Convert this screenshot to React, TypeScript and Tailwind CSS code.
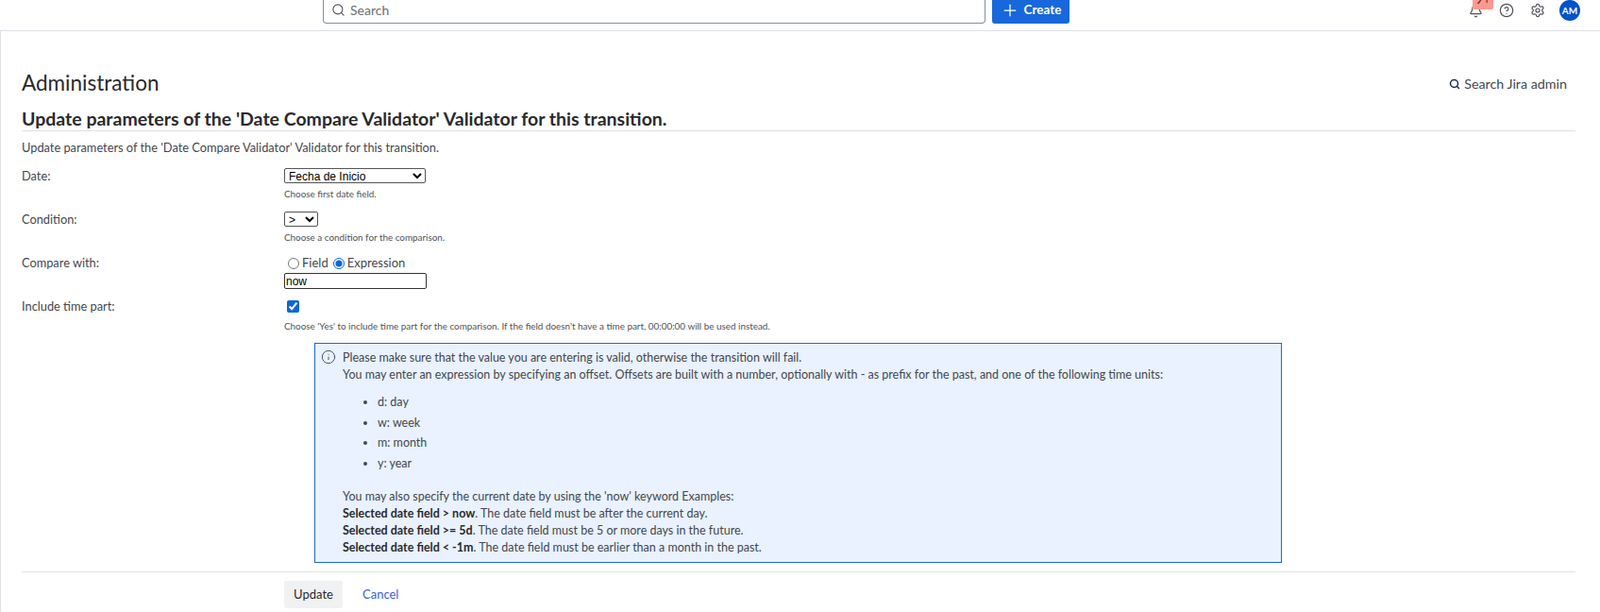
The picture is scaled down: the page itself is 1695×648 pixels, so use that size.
import React from "react";
import { Search, Plus, Bell, CircleHelp, Settings, Info } from "lucide-react";

const font = "font-['Lato','Open_Sans',sans-serif]";

const Row = ({ label, children }: { label: string; children: React.ReactNode }) => (
  <div className="flex">
    <div className="w-[278px] shrink-0 text-[12.8px] leading-[18px] text-[#44474f]">{label}</div>
    <div className="flex-1">{children}</div>
  </div>
);

const Help = ({ children }: { children: React.ReactNode }) => (
  <div className="text-[9.9px] leading-[12px] text-[#505258]">{children}</div>
);

export default function App() {
  return (
    <div className={`${font} h-[648px] w-[1695px] overflow-hidden bg-white text-[#292a2e]`}>
      {/* Top bar */}
      <header className="flex h-[33px] border-b border-[#dfe1e6]">
        <div className="ml-[342px] flex h-[25px] w-[702px] items-center gap-[5px] rounded-b-[4px] border-x border-b border-[#8590a2] pb-[3px] pl-[8px]">
          <Search size={15} strokeWidth={1.8} className="text-[#505258]" />
          <span className="text-[14px] text-[#6b6e76]">Search</span>
        </div>
        <button className="ml-[7px] flex h-[25px] w-[82px] items-center justify-center gap-[5px] rounded-b-[3px] bg-[#1868db] pb-[4px] text-[13.5px] font-bold text-white">
          <Plus size={20} strokeWidth={1.5} />
          Create
        </button>
        <div className="ml-auto mr-[21px] flex h-[22px] items-center">
          <div className="relative mr-[17px] flex w-[15px] justify-center">
            <Bell size={15} strokeWidth={1.8} className="mt-[1px] text-[#505258]" />
            <span className="absolute left-[4px] top-[-4px] flex h-[11px] w-[22px] items-end justify-center rounded-b-[2px] bg-[#fd9891] pb-[4px] text-[14px] leading-[14px] text-[#5d1f1a]">
              9+
            </span>
          </div>
          <CircleHelp size={16} strokeWidth={1.8} className="mr-[17px] text-[#505258]" />
          <Settings size={16} strokeWidth={1.8} className="mr-[15px] text-[#505258]" />
          <div className="flex h-[22px] w-[22px] items-center justify-center rounded-full bg-[#0052cc] text-[10px] font-bold text-white">
            AM
          </div>
        </div>
      </header>

      {/* Page */}
      <main className="h-[615px] border-l border-[#dfe1e6] pl-[22px] pr-[26px]">
        <div className="flex items-center justify-between pt-[41px]">
          <h1 className="text-[22.5px] leading-[28px] text-[#292a2e]">Administration</h1>
          <a className="mt-[1px] flex items-center gap-[4px] pr-[9px] text-[14.3px] text-[#44474f]">
            <Search size={12} strokeWidth={3} className="text-[#172b4d]" />
            Search Jira admin
          </a>
        </div>

        <h2 className="mt-[12px] border-b border-[#dfe1e6] pb-[1px] text-[19.5px] font-bold leading-[23px] text-[#292a2e]">
          Update parameters of the 'Date Compare Validator' Validator for this transition.
        </h2>
        <p className="mt-[8px] text-[12.8px] leading-[18px] text-[#44474f]">
          Update parameters of the 'Date Compare Validator' Validator for this transition.
        </p>

        <form className="mt-[12px]">
          <Row label="Date:">
            <select className="mt-[1px] block h-[16px] w-[150px] rounded-[2px] border border-[#555] bg-white font-['Liberation_Sans',sans-serif] text-[12px] leading-[14px] text-black" defaultValue="inicio">
              <option value="inicio">Fecha de Inicio</option>
            </select>
            <div className="mt-[5px]"><Help>Choose first date field.</Help></div>
          </Row>

          <div className="mt-[12px]">
            <Row label="Condition:">
              <select className="mt-[1px] block h-[16px] w-[36px] rounded-[2px] border border-[#555] bg-white font-['Liberation_Sans',sans-serif] text-[12px] leading-[14px] text-black" defaultValue="gt">
                <option value="gt">&gt;</option>
              </select>
              <div className="mt-[5px]"><Help>Choose a condition for the comparison.</Help></div>
            </Row>
          </div>

          <div className="mt-[12px]">
            <Row label="Compare with:">
              <div className="mt-[1px] flex h-[18px] items-center pl-[4px] text-[13px] text-[#44474f]">
                <input type="radio" name="cmp" className="m-0 h-[12px] w-[12px]" />
                <span className="ml-[3px]">Field</span>
                <input type="radio" name="cmp" defaultChecked className="ml-[5px] h-[12px] w-[12px] accent-[#0b66d8]" />
                <span className="ml-[3px]">Expression</span>
              </div>
              <input
                defaultValue="now"
                className="mt-[1px] block h-[17px] w-[151px] rounded-[2px] border border-[#333] bg-white pl-[1px] font-['Liberation_Sans',sans-serif] text-[12px] text-black outline-none"
              />
            </Row>
          </div>

          <div className="mt-[9px]">
            <Row label="Include time part:">
              <input type="checkbox" defaultChecked className="ml-[3px] mt-[3px] block h-[13px] w-[13px] accent-[#0b66d8]" />
              <div className="mt-[8px]">
                <Help>Choose 'Yes' to include time part for the comparison. If the field doesn't have a time part, 00:00:00 will be used instead.</Help>
              </div>
            </Row>
          </div>

          {/* Info message */}
          <div className="ml-[310px] mt-[12px] flex h-[233px] w-[1025px] border border-[#1868db] bg-[#e9f2fe] pl-[6px] pt-[6px] text-[12.5px] leading-[18px] text-[#44474f]">
            <Info size={16} strokeWidth={1.5} className="shrink-0 text-[#44546f]" />
            <div className="ml-[7px]">
              <p>Please make sure that the value you are entering is valid, otherwise the transition will fail.</p>
              <p>You may enter an expression by specifying an offset. Offsets are built with a number, optionally with - as prefix for the past, and one of the following time units:</p>
              <ul className="mb-[17px] ml-[37px] mt-[11px] list-disc space-y-[3.7px]">
                <li>d: day</li>
                <li>w: week</li>
                <li>m: month</li>
                <li>y: year</li>
              </ul>
              <p>You may also specify the current date by using the 'now' keyword Examples:</p>
              <p><b className="text-[#292a2e]">Selected date field &gt; now</b>. The date field must be after the current day.</p>
              <p><b className="text-[#292a2e]">Selected date field &gt;= 5d</b>. The date field must be 5 or more days in the future.</p>
              <p><b className="text-[#292a2e]">Selected date field &lt; -1m</b>. The date field must be earlier than a month in the past.</p>
            </div>
          </div>

          <div className="mt-[9px] flex items-center border-t border-[#dfe1e6] pl-[278px] pt-[9px]">
            <button type="button" className="h-[29px] w-[62px] rounded-[3px] bg-[#f0f1f2] text-[13px] text-[#292a2e]">
              Update
            </button>
            <a className="ml-[21px] text-[13px] text-[#3d5ee0]">Cancel</a>
          </div>
        </form>
      </main>
    </div>
  );
}
